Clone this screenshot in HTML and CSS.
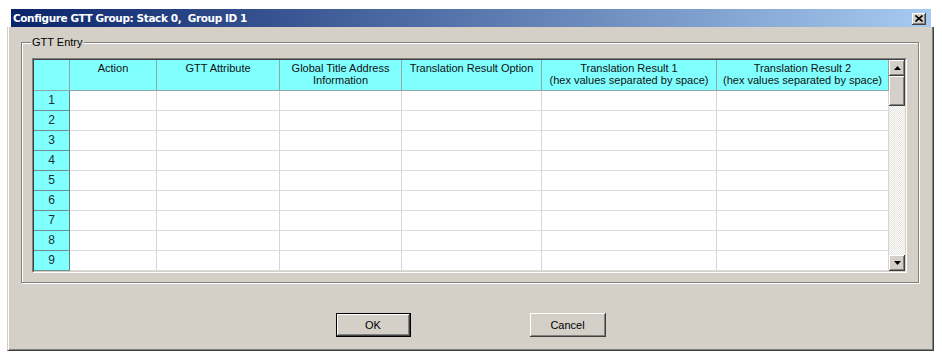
FILE: index.html
```html
<!DOCTYPE html>
<html lang="en">
<head>
  <meta charset="UTF-8" />
  <title>Configure GTT Group</title>
  <link rel="stylesheet" href="styles.css">
</head>
<body>

  <div class="window">
    <div class="titlebar">
      <span class="title">Configure GTT Group: Stack 0,&nbsp; Group ID 1</span>
      <button class="close" title="Close">
        <svg width="8" height="7" viewBox="0 0 8 7"><path d="M0.5 0.5 L7.5 6.5 M7.5 0.5 L0.5 6.5" stroke="#000" stroke-width="1.6" fill="none"/></svg>
      </button>
    </div>

    <div class="frame">
      <div class="group">
        <span class="group-label">GTT Entry</span>

        <div class="grid-box">
          <div class="grid-inner">
            <div class="grid">
              <!-- header row -->
              <div class="hd corner"></div>
              <div class="hd">Action</div>
              <div class="hd">GTT Attribute</div>
              <div class="hd">Global Title Address<br>Information</div>
              <div class="hd">Translation Result Option</div>
              <div class="hd">Translation Result 1<br>(hex values separated by space)</div>
              <div class="hd">Translation Result 2<br>(hex values separated by space)</div>

              <div class="rh">1</div><div class="c"></div><div class="c"></div><div class="c"></div><div class="c"></div><div class="c"></div><div class="c"></div>
              <div class="rh">2</div><div class="c"></div><div class="c"></div><div class="c"></div><div class="c"></div><div class="c"></div><div class="c"></div>
              <div class="rh">3</div><div class="c"></div><div class="c"></div><div class="c"></div><div class="c"></div><div class="c"></div><div class="c"></div>
              <div class="rh">4</div><div class="c"></div><div class="c"></div><div class="c"></div><div class="c"></div><div class="c"></div><div class="c"></div>
              <div class="rh">5</div><div class="c"></div><div class="c"></div><div class="c"></div><div class="c"></div><div class="c"></div><div class="c"></div>
              <div class="rh">6</div><div class="c"></div><div class="c"></div><div class="c"></div><div class="c"></div><div class="c"></div><div class="c"></div>
              <div class="rh">7</div><div class="c"></div><div class="c"></div><div class="c"></div><div class="c"></div><div class="c"></div><div class="c"></div>
              <div class="rh">8</div><div class="c"></div><div class="c"></div><div class="c"></div><div class="c"></div><div class="c"></div><div class="c"></div>
              <div class="rh">9</div><div class="c"></div><div class="c"></div><div class="c"></div><div class="c"></div><div class="c"></div><div class="c"></div>
            </div>

            <div class="scrollbar">
              <div class="sb-btn">
                <svg width="7" height="4" viewBox="0 0 7 4"><polygon points="3.5,0 7,4 0,4" fill="#000"/></svg>
              </div>
              <div class="sb-thumb"></div>
              <div class="sb-track"></div>
              <div class="sb-btn">
                <svg width="7" height="4" viewBox="0 0 7 4"><polygon points="0,0 7,0 3.5,4" fill="#000"/></svg>
              </div>
            </div>
          </div>
        </div>
      </div>

      <div class="buttons">
        <button class="btn default">OK</button>
        <button class="btn cancel">Cancel</button>
      </div>
    </div>
  </div>

</body>
</html>
```

FILE: styles.css
```css
:root {
  --face: #d4d0c8;
  --shadow: #808080;
  --dark: #404040;
  --cyan: #80ffff;
}

* {
  box-sizing: border-box;
}

body {
  margin: 0;
  padding: 9px 0 0 7px;
  background: #fff;
  font-family: 'Liberation Sans', Arial, sans-serif;
  font-size: 11px;
  color: #000;
}

.window {
  width: 927px;
}

/* title bar */
.titlebar {
  margin-left: 4px;
  width: 920px;
  height: 18px;
  display: flex;
  align-items: center;
  justify-content: space-between;
  padding: 0 5px 0 2px;
  background: linear-gradient(90deg, #0a246a, #a6caf0);
}

.title {
  color: #fff;
  font-family: 'DejaVu Sans', sans-serif;
  font-weight: bold;
  font-size: 10.5px;
  letter-spacing: -0.4px;
  white-space: nowrap;
}

.close {
  width: 14px;
  height: 12px;
  padding: 0;
  margin-top: 1px;
  border: none;
  background: var(--face);
  display: flex;
  align-items: center;
  justify-content: center;
  box-shadow: inset -1px -1px var(--dark), inset 1px 1px #fff, inset -2px -2px var(--shadow);
}

/* dialog body */
.frame {
  height: 324px;
  background: var(--face);
  padding: 15px 12px 0 13px;
  border-left: 1px solid var(--face);
  border-right: 1px solid var(--dark);
  border-bottom: 1px solid var(--dark);
  box-shadow: inset 1px 0 #fff, inset -1px -1px var(--shadow);
}

.group {
  position: relative;
  width: 898px;
  height: 241px;
  padding: 15px 11px 9px 10px;
  border: 1px solid var(--shadow);
  box-shadow: inset 1px 1px #fff, 1px 1px #fff;
}

.group-label {
  position: absolute;
  top: -7px;
  left: 9px;
  padding: 0 1px;
  background: var(--face);
  line-height: 12px;
}

.grid-box {
  width: 875px;
  height: 215px;
  border: 1px solid;
  border-color: var(--shadow) #fff #fff var(--shadow);
}

.grid-inner {
  height: 100%;
  display: flex;
  background: #fff;
  border: 1px solid;
  border-color: var(--dark) var(--face) var(--face) var(--dark);
}

.grid {
  display: grid;
  grid-template-columns: 36px 87px 123px 122px 140px 175px 172px;
  grid-template-rows: 31px repeat(9, 20px);
  width: 855px;
}

.hd {
  background: var(--cyan);
  border-right: 1px solid #8ca8a8;
  border-bottom: 1px solid #8ca8a8;
  text-align: center;
  line-height: 12px;
  padding-top: 2px;
  color: #111;
  white-space: nowrap;
}

.rh {
  background: var(--cyan);
  border-right: 1px solid #5f7f7f;
  border-bottom: 1px solid #6f8f8f;
  text-align: center;
  line-height: 19px;
  font-size: 12px;
  color: #1c2c38;
}

.c {
  border-right: 1px solid #d6d6d6;
  border-bottom: 1px solid #dcdcdc;
}

/* vertical scrollbar */
.scrollbar {
  width: 16px;
  display: flex;
  flex-direction: column;
}

.sb-btn,
.sb-thumb {
  background: var(--face);
  box-shadow: inset -1px -1px var(--dark), inset 1px 1px #fff, inset -2px -2px var(--shadow);
}

.sb-btn {
  height: 16px;
  display: flex;
  align-items: center;
  justify-content: center;
}

.sb-thumb {
  height: 30px;
}

.sb-track {
  flex: 1;
  background: repeating-conic-gradient(#fff 0 25%, #e4e1db 0 50%) 0 0 / 2px 2px;
}

/* OK / Cancel */
.buttons {
  display: flex;
  justify-content: center;
  gap: 119px;
  margin-top: 30px;
  padding-right: 1px;
}

.btn {
  width: 76px;
  height: 24px;
  padding: 0;
  border: none;
  background: var(--face);
  font-family: 'Liberation Sans', Arial, sans-serif;
  font-size: 11px;
  color: #000;
  box-shadow: inset -1px -1px var(--dark), inset 1px 1px #fff, inset -2px -2px var(--shadow);
}

.btn.default {
  width: 75px;
  border: 1px solid #000;
}
```
